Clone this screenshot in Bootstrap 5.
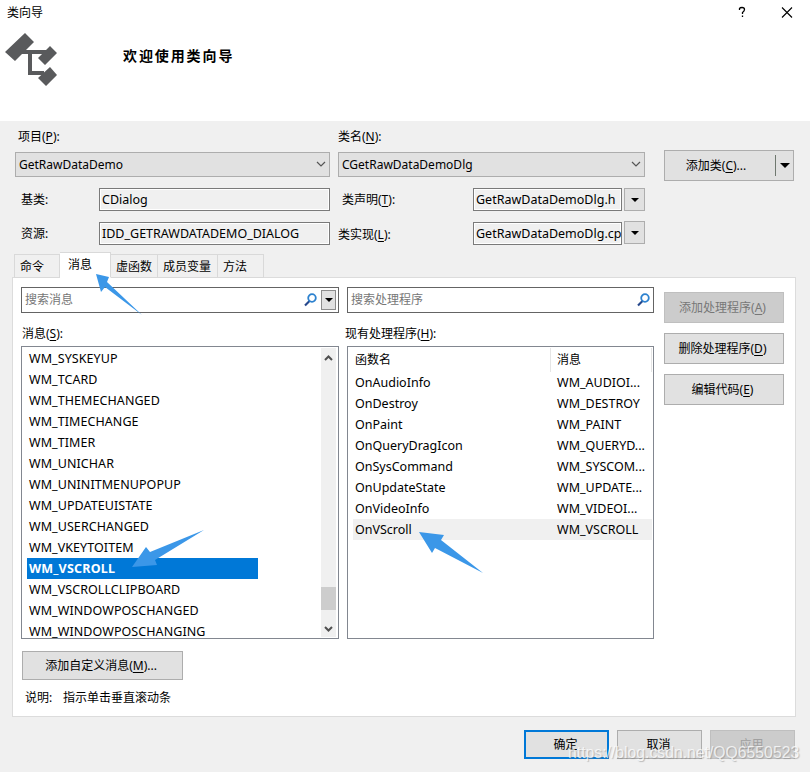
<!DOCTYPE html>
<html lang="zh-CN">
<head>
<meta charset="utf-8">
<meta name="viewport" content="width=device-width, initial-scale=1">
<title>类向导</title>
<link href="https://cdn.jsdelivr.net/npm/bootstrap@5.3.0/dist/css/bootstrap.min.css" rel="stylesheet">
<style>
body{font:12px/20px "Noto Sans","Noto Sans CJK SC",sans-serif;color:#000;background:#f0f0f0;width:810px;height:772px;overflow:hidden}
.lat{font-size:12.5px;white-space:nowrap}
u{text-underline-offset:2px}
.dlg-head{height:121px}
.title-line{height:26px;padding-left:7px;line-height:25px}
.headline{font:bold 14px/24px "Noto Sans CJK SC",sans-serif;letter-spacing:1.9px;margin:17px 0 0 64px}
.form-zone{height:124px;margin-left:15px;margin-top:6px}
.col-a{width:315px;margin-right:8px}
.col-b{width:307px;margin-right:19px}
.cap{padding-left:3px}
.w-btn{background:#e1e1e1;border:1px solid #adadad;white-space:nowrap;display:flex;align-items:center;justify-content:center;font:inherit;color:#000;padding:0;border-radius:0}
.w-btn:disabled{background:#ccc;border-color:#bfbfbf;color:#777}
.combo{height:25px;margin-top:5px;padding:0 3px;justify-content:space-between}
.ro{border:1px solid #7a7a7a;height:23px;line-height:21px;box-shadow:inset 0 0 0 1px #fff;padding:0 2px;overflow:hidden}
.side-lbl{padding-left:6px;line-height:24px;height:20px}
.side-lbl.s4{padding-left:4px}.side-lbl.s0{padding-left:0;line-height:26px}
.wide-ro{width:231px}.file-ro{width:149px}
.drop{width:21px;height:23px;margin-left:2px}
.drop.up{margin-top:-1px}
.tri{border:4px solid transparent;border-top:4px solid #000;border-bottom:0}
.tri.big{border-width:5px 5px 0}
.fr{margin-top:11px}
.cls-btn{width:130px;height:31px;margin-top:23px}
.cls-btn .split{width:18px;height:21px;border-left:1px solid #6f786f;padding-left:4px}
.wtabs{height:27px;margin:0 0 -1px 14px;position:relative;z-index:1}
.wtab{height:24px;border:1px solid #d9d9d9;border-left:0;background:#f0f0f0;line-height:23px;padding-left:5px;white-space:nowrap}
.wtab.first{border-left:1px solid #d9d9d9}
.wtab.on{height:26px;background:#fff;border-bottom-color:#fff;line-height:23px;padding-left:8px}
.t1{width:46px}.t2{width:51px}.t3{width:47px}.t4{width:60px}.t5{width:46px}
.panel{width:784px;height:440px;margin-left:12px;border:1px solid #dcdcdc;background:#fff;padding:9px 0 0 8px}
.left-side{width:318px;margin-right:8px}.right-side{width:307px;margin-right:10px}
.search{height:26px;border:1px solid #646464;color:#767676;padding:0 3px 0 3px}
.search.dd{padding-right:2px}
.sdrop{width:15px;height:20px;border-color:#8c8c8c}
.lbl{height:33px;line-height:42px;padding-left:1px}
.lbl.out{margin-left:-3px}
.box{height:293px;border:1px solid #828790;overflow:hidden}
.msgs{padding:1px 0 0 5px;width:299px;letter-spacing:.07px}
.msgs li{height:21px;line-height:22px;padding-left:2px;width:231px;white-space:nowrap}
.msgs li.sel{background:#0078d7;color:#fff;font-weight:bold;letter-spacing:.2px}
.sbar{width:15px;background:#f0f0f0;margin:1px 2px 1px 0}
.thumb{height:23px;background:#cdcdcd;margin-top:223px}
.hrow{height:21px;line-height:22px;margin:0 1px 0 5px;padding-left:2px}
.hrow.cur{background:#f0f0f0}
.hrow .fn{width:202px}
.hhead{height:24px;margin:1px 1px 0 5px;padding-left:2px;line-height:24px;border-right:1px solid #e5e5e5}
.hhead .fn{width:196px;border-right:1px solid #e5e5e5;margin-right:6px}
.act{width:120px;height:31px;margin-bottom:10px;padding-right:3px}
.acts{margin-top:5px}
.custom{width:161px;height:29px;margin:12px 0 0 1px;padding-right:3px}
.desc{margin:8px 0 0 4px}
.desc .key{width:38px}
.foot{margin:13px 0 0 524px;gap:8px}
.foot .w-btn{width:85px;height:29px;padding-right:2px}
.foot .ok{border:2px solid #0078d7}
.foot .w-btn:disabled{color:#a0a0a0}
.arrows{left:0;top:0;z-index:3;pointer-events:none}
.stamp{left:568px;top:742px;z-index:4;font:15.75px/22px "Liberation Sans",sans-serif;color:rgba(255,255,255,.75);text-shadow:1px 1px 1px rgba(120,120,120,.45);white-space:nowrap}
</style>
<script src="https://cdn.jsdelivr.net/npm/bootstrap@5.3.0/dist/js/bootstrap.bundle.min.js"></script>
</head>
<body class="position-relative">
<header class="dlg-head bg-white">
  <div class="title-line d-flex justify-content-between"><span>类向导</span>
    <svg width="75" height="26" fill="none" stroke="#000"><path d="M4.500 10V8.500Q5 7.500 7 7.500Q9.500 7.500 9.500 9.500Q9.500 11 7.500 12.500V14M7.500 15.500V17" stroke-width="1.300"/><path d="M47 7.500l10 10M57 7.500l-10 10" stroke-width="1.100"/></svg>
  </div>
  <div class="d-flex">
    <svg class="flex-shrink-0" width="59" height="62"><g fill="#595a5c"><path d="M25 7l9 9-19 19-10-9zM50 20l7 7-12 12-7-7zM50 41l7 8-11 11-8-8z"/><path d="M22 24h24v4H32v17h12v4H28V28h-6z"/></g></svg>
    <h1 class="headline">欢迎使用类向导</h1>
  </div>
</header>
<section class="form-zone d-flex">
  <div class="col-a">
    <div class="cap">项目(<u>P</u>):</div>
    <div class="w-btn combo lat"><span>GetRawDataDemo</span><svg width="10" height="7" fill="none" stroke="#555" stroke-width="1.200"><path d="M1 1l4 4 4-4"/></svg></div>
    <div class="d-flex justify-content-between fr"><span class="side-lbl">基类:</span><div class="ro wide-ro lat">CDialog</div></div>
    <div class="d-flex justify-content-between fr"><span class="side-lbl">资源:</span><div class="ro wide-ro lat">IDD_GETRAWDATADEMO_DIALOG</div></div>
  </div>
  <div class="col-b">
    <div>类名(<u>N</u>):</div>
    <div class="w-btn combo lat"><span>CGetRawDataDemoDlg</span><svg width="10" height="7" fill="none" stroke="#555" stroke-width="1.200"><path d="M1 1l4 4 4-4"/></svg></div>
    <div class="d-flex fr"><span class="flex-grow-1 side-lbl s4">类声明(<u>T</u>):</span><div class="ro file-ro lat">GetRawDataDemoDlg.h</div><div class="w-btn drop"><i class="tri"></i></div></div>
    <div class="d-flex fr"><span class="flex-grow-1 side-lbl s0">类实现(<u>L</u>):</span><div class="ro file-ro lat">GetRawDataDemoDlg.cp</div><div class="w-btn drop up"><i class="tri"></i></div></div>
  </div>
  <div class="w-btn cls-btn"><span class="flex-grow-1 text-center me-2">添加类(<u>C</u>)...</span><span class="split d-flex align-items-center"><i class="tri big"></i></span></div>
</section>
<nav class="wtabs d-flex align-items-end"><div class="wtab first t1">命令</div><div class="wtab on t2">消息</div><div class="wtab t3">虚函数</div><div class="wtab t4">成员变量</div><div class="wtab t5">方法</div></nav>
<main class="panel">
  <div class="d-flex align-items-start">
    <div class="left-side">
      <div class="search dd d-flex align-items-center"><span class="flex-grow-1">搜索消息</span>
        <svg width="13" height="14" fill="none" class="me-1"><path d="M6 7.500L1 12.500" stroke="#27488c" stroke-width="2.200"/><circle cx="8" cy="5" r="3.800" stroke="#2d82cf" stroke-width="1.800"/></svg>
        <div class="w-btn sdrop"><i class="tri"></i></div></div>
      <div class="lbl">消息(<u>S</u>):</div>
      <div class="box d-flex">
        <ul class="msgs list-unstyled mb-0 lat"><li>WM_SYSKEYUP</li><li>WM_TCARD</li><li>WM_THEMECHANGED</li><li>WM_TIMECHANGE</li><li>WM_TIMER</li><li>WM_UNICHAR</li><li>WM_UNINITMENUPOPUP</li><li>WM_UPDATEUISTATE</li><li>WM_USERCHANGED</li><li>WM_VKEYTOITEM</li><li class="sel">WM_VSCROLL</li><li>WM_VSCROLLCLIPBOARD</li><li>WM_WINDOWPOSCHANGED</li><li>WM_WINDOWPOSCHANGING</li></ul>
        <div class="sbar d-flex flex-column"><svg width="15" height="16" class="flex-shrink-0" fill="none" stroke="#505050" stroke-width="2"><path d="M4 12l3.500-3.500L11 12"/></svg><div class="thumb flex-shrink-0"></div><svg width="15" height="16" class="mt-auto flex-shrink-0" fill="none" stroke="#505050" stroke-width="2"><path d="M4 6l3.500 3.500L11 6"/></svg></div>
      </div>
    </div>
    <div class="right-side">
      <div class="search d-flex align-items-center"><span class="flex-grow-1">搜索处理程序</span>
        <svg width="13" height="14" fill="none"><path d="M6 7.500L1 12.500" stroke="#27488c" stroke-width="2.200"/><circle cx="8" cy="5" r="3.800" stroke="#2d82cf" stroke-width="1.800"/></svg></div>
      <div class="lbl out">现有处理程序(<u>H</u>):</div>
      <div class="box">
        <div class="hhead d-flex"><span class="fn">函数名</span><span>消息</span></div>
        <div class="lat">
        <div class="hrow d-flex"><span class="fn">OnAudioInfo</span><span>WM_AUDIOI...</span></div>
        <div class="hrow d-flex"><span class="fn">OnDestroy</span><span>WM_DESTROY</span></div>
        <div class="hrow d-flex"><span class="fn">OnPaint</span><span>WM_PAINT</span></div>
        <div class="hrow d-flex"><span class="fn">OnQueryDragIcon</span><span>WM_QUERYD...</span></div>
        <div class="hrow d-flex"><span class="fn">OnSysCommand</span><span>WM_SYSCOM...</span></div>
        <div class="hrow d-flex"><span class="fn">OnUpdateState</span><span>WM_UPDATE...</span></div>
        <div class="hrow d-flex"><span class="fn">OnVideoInfo</span><span>WM_VIDEOI...</span></div>
        <div class="hrow cur d-flex"><span class="fn">OnVScroll</span><span>WM_VSCROLL</span></div>
        </div>
      </div>
    </div>
    <div class="acts"><button class="w-btn act" disabled>添加处理程序(<u>A</u>)</button><button class="w-btn act">删除处理程序(<u>D</u>)</button><button class="w-btn act">编辑代码(<u>E</u>)</button></div>
  </div>
  <button class="w-btn custom">添加自定义消息(<u>M</u>)...</button>
  <div class="desc d-flex"><span class="key">说明:</span><span>指示单击垂直滚动条</span></div>
</main>
<footer class="foot d-flex"><button class="w-btn ok">确定</button><button class="w-btn">取消</button><button class="w-btn" disabled>应用</button></footer>
<svg class="arrows position-absolute" width="810" height="772" fill="#3b97e8"><path d="M96 274l13 3-2 5 35 33-37-28-4 5zM132 567l14-20 4 5 54-22-49 30 2 5zM419 532l25 3-3 5 42 33-48-25-3 5z"/></svg>
<div class="stamp position-absolute">https://blog.csdn.net/QQ6550523</div>
</body>
</html>
